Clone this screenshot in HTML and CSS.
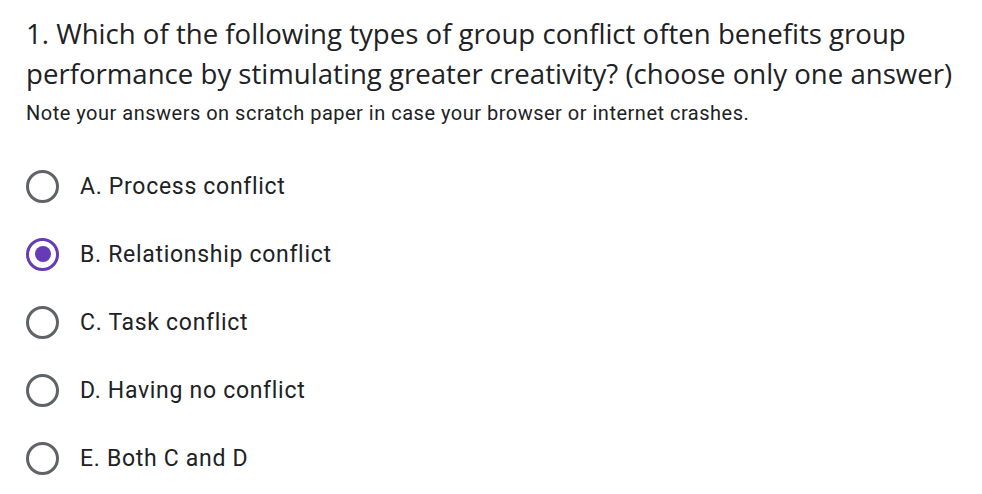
FILE: index.html
```html
<!DOCTYPE html>
<html>
<head>
<meta charset="utf-8">
<link rel="stylesheet" href="styles.css">
</head>
<body>
<div class="question">
  <div class="title">1. Which of the following types of group conflict often benefits group performance by stimulating greater creativity? (choose only one answer)</div>
  <div class="note">Note your answers on scratch paper in case your browser or internet crashes.</div>
  <div class="options">
    <label class="option"><span class="radio"></span><span class="label">A. Process conflict</span></label>
    <label class="option"><span class="radio checked"></span><span class="label">B. Relationship conflict</span></label>
    <label class="option"><span class="radio"></span><span class="label">C. Task conflict</span></label>
    <label class="option"><span class="radio"></span><span class="label">D. Having no conflict</span></label>
    <label class="option"><span class="radio"></span><span class="label">E. Both C and D</span></label>
  </div>
</div>
</body>
</html>
```
FILE: styles.css
```css
html, body {
  margin: 0;
  padding: 0;
  background: #ffffff;
}
.question {
  padding: 13px 20px 0 26px;
  color: #202124;
}
.title {
  font-family: "Open Sans", sans-serif;
  font-size: 27.6px;
  line-height: 40px;
  width: 940px;
}
.note {
  margin-top: 8px;
  font-family: Roboto, sans-serif;
  font-size: 20px;
  letter-spacing: 0.5px;
  line-height: 24px;
}
.options {
  margin-top: 27px;
  display: flex;
  flex-direction: column;
}
.option {
  height: 68px;
  display: flex;
  align-items: center;
  gap: 21px;
}
.radio {
  box-sizing: border-box;
  width: 33px;
  height: 33px;
  border: 3px solid #5f6368;
  border-radius: 50%;
  display: flex;
  align-items: center;
  justify-content: center;
  flex: none;
}
.radio.checked {
  border-color: #673ab7;
}
.radio.checked::after {
  content: "";
  width: 16px;
  height: 16px;
  border-radius: 50%;
  background: #673ab7;
}
.label {
  font-family: Roboto, sans-serif;
  font-size: 23px;
  letter-spacing: 0.7px;
  line-height: 28px;
  padding-top: 2px;
}
```
